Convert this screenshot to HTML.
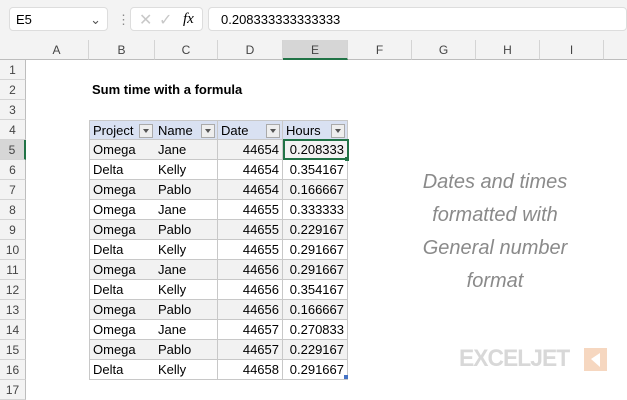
<!DOCTYPE html><html><head><style>
body{margin:0;width:627px;height:400px;overflow:hidden;background:#fff;font-family:"Liberation Sans",sans-serif;position:relative}
.a{position:absolute}
.ch{position:absolute;top:40px;height:19px;border-right:1px solid #d4d4d4;border-bottom:1px solid #bdbdbd;background:#f3f3f3;text-align:center;font-size:12px;line-height:20px;color:#444}
.rh{position:absolute;left:0;width:25px;height:19px;border-bottom:1px solid #d4d4d4;border-right:1px solid #bdbdbd;background:#f3f3f3;text-align:center;font-size:12px;line-height:20px;color:#444}
.c{position:absolute;height:19px;border-right:1px solid #c8c8c8;border-bottom:1px solid #c8c8c8;font-size:13px;line-height:20px;padding:0 3px;box-sizing:content-box;white-space:nowrap;overflow:hidden}
.r{text-align:right}
.dd{position:absolute;top:3px;right:2px;width:12px;height:12px;border:1px solid #aaa;background:#eee}
.dd:after{content:"";position:absolute;left:3px;top:4px;border:3px solid transparent;border-top:4px solid #555}
.it{position:absolute;left:385px;width:220px;text-align:center;font-style:italic;color:#8a8a8a;font-size:20px}
</style></head><body>
<div class="a" style="left:0;top:0;width:627px;height:40px;background:#f3f3f3"></div>
<div class="a" style="left:9px;top:7px;width:99px;height:24px;border:1px solid #ddd;border-radius:4px;background:#fff;font-size:13px;line-height:24px;padding-left:6px;box-sizing:border-box">E5<span style="position:absolute;right:6px;top:0;color:#555">&#x2304;</span></div>
<div class="a" style="left:117px;top:12px;color:#888;font-size:13px">&#8942;</div>
<div class="a" style="left:130px;top:7px;width:73px;height:24px;border:1px solid #ddd;border-radius:4px;background:#fff;box-sizing:border-box">
<span class="a" style="left:8px;top:2px;color:#c8c8c8;font-size:16px">&#x2715;</span><span class="a" style="left:28px;top:2px;color:#c8c8c8;font-size:16px">&#x2713;</span><span class="a" style="left:52px;top:3px;font-style:italic;font-family:'Liberation Serif',serif;font-size:15px">fx</span></div>
<div class="a" style="left:208px;top:7px;width:419px;height:24px;border:1px solid #ddd;border-radius:4px;background:#fff;font-size:13px;line-height:24px;padding-left:12px;box-sizing:border-box">0.208333333333333</div>
<div class="ch" style="left:0;width:25px"></div>
<div class="ch" style="left:25px;width:63px">A</div><div class="ch" style="left:89px;width:65px">B</div><div class="ch" style="left:155px;width:62px">C</div><div class="ch" style="left:218px;width:64px">D</div><div class="ch" style="left:283px;width:64px;background:#d6d6d6;border-bottom:2px solid #217346;height:18px">E</div><div class="ch" style="left:348px;width:63px">F</div><div class="ch" style="left:412px;width:63px">G</div><div class="ch" style="left:476px;width:63px">H</div><div class="ch" style="left:540px;width:63px">I</div><div class="ch" style="left:604px;width:30px"></div>
<div id="rows"></div>
<div class="a" style="left:92px;top:82px;font-weight:bold;font-size:13px">Sum time with a formula</div>
<div id="t"></div>
<div class="it" style="top:171px">Dates and times</div>
<div class="it" style="top:204px">formatted with</div>
<div class="it" style="top:237px">General number</div>
<div class="it" style="top:270px">format</div>
<div class="a" style="left:459px;top:345px;font-weight:bold;font-size:24px;color:#d8d8d8;letter-spacing:-1px;transform:scaleX(0.95);transform-origin:left">EXCELJET</div>
<div class="a" style="left:584px;top:348px;width:23px;height:23px;background:#f6d7c0"><div class="a" style="left:7px;top:5px;border-right:9px solid #fff;border-top:6px solid transparent;border-bottom:8px solid transparent"></div></div>
<script>
var h='';for(var i=1;i<=17;i++){var y=40+i*20;h+='<div class="rh" style="top:'+y+'px;'+(i==5?'background:#d6d6d6;border-right:2px solid #217346;width:24px':'')+'">'+i+'</div>';}
document.getElementById('rows').innerHTML=h;
var d=[["Omega","Jane",44654,"0.208333"],["Delta","Kelly",44654,"0.354167"],["Omega","Pablo",44654,"0.166667"],["Omega","Jane",44655,"0.333333"],["Omega","Pablo",44655,"0.229167"],["Delta","Kelly",44655,"0.291667"],["Omega","Jane",44656,"0.291667"],["Delta","Kelly",44656,"0.354167"],["Omega","Pablo",44656,"0.166667"],["Omega","Jane",44657,"0.270833"],["Omega","Pablo",44657,"0.229167"],["Delta","Kelly",44658,"0.291667"]];
var X=[[89,59],[155,56],[218,58],[283,58]];var t='';
var hd=["Project","Name","Date","Hours"];
for(var j=0;j<4;j++)t+='<div class="c" style="left:'+X[j][0]+'px;top:120px;width:'+X[j][1]+'px;background:#d9e1f2;border-left:'+(j==0?'1px solid #c8c8c8':'0')+';border-top:1px solid #c8c8c8;height:18px">'+hd[j]+'<div class="dd"></div></div>';
for(var i=0;i<12;i++){var bg=i%2?'#fff':'#f2f2f2';for(var j=0;j<4;j++)t+='<div class="c'+(j>1?' r':'')+'" style="left:'+X[j][0]+'px;top:'+(140+i*20)+'px;width:'+X[j][1]+'px;background:'+bg+';'+(j==0?'border-left:1px solid #c8c8c8;':'')+'">'+d[i][j]+'</div>';}
t+='<div class="a" style="left:283px;top:139px;width:62px;height:17px;border:2px solid #217346"></div><div class="a" style="left:345px;top:157px;width:4px;height:4px;background:#217346"></div>';
t+='<div class="a" style="left:344px;top:375px;width:4px;height:4px;background:#4472c4"></div>';
document.getElementById('t').innerHTML=t;
</script>
</body></html>
